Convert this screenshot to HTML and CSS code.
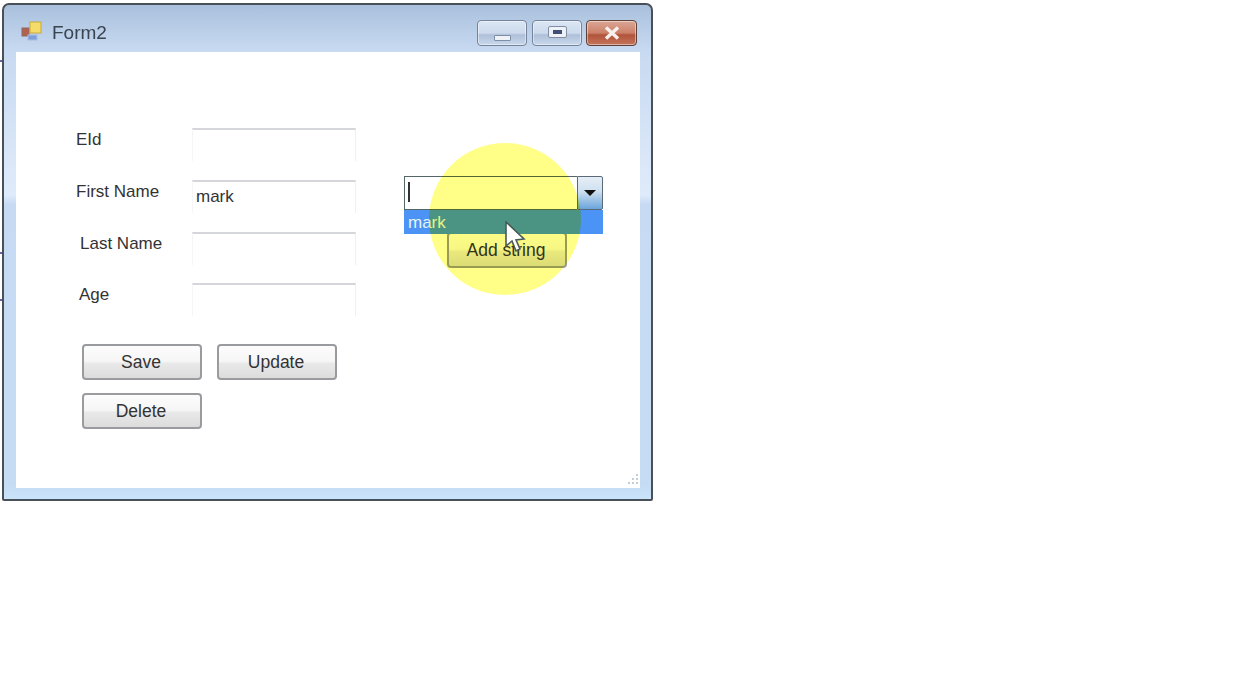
FILE: index.html
```html
<!DOCTYPE html>
<html lang="en">
<head>
    <meta charset="UTF-8">
    <meta name="viewport" content="width=device-width, initial-scale=1.0">
    <title>Form2</title>
    <link rel="stylesheet" href="styles.css">
</head>
<body>
    <span class="tick tick-1"></span>
    <span class="tick tick-2"></span>
    <span class="tick tick-3"></span>
    <div class="window">
        <div class="titlebar">
            <svg class="app-icon" width="22" height="22" viewBox="0 0 22 22">
                <rect x="1" y="8" width="7" height="8" fill="#b5604f" stroke="#8c6a66"/>
                <rect x="7" y="15" width="9" height="5" fill="#7d9fdc" stroke="#a9bce0"/>
                <rect x="9" y="2" width="11" height="11" fill="#f5dc6a" stroke="#c9a93f"/>
            </svg>
            <span class="title">Form2</span>
            <div class="caption-buttons">
                <div class="caption-btn">
                    <span class="min-glyph"></span>
                </div>
                <div class="caption-btn">
                    <span class="max-glyph"><span class="max-bar"></span></span>
                </div>
                <div class="caption-btn close">
                    <svg width="18" height="14" viewBox="0 0 18 14">
                        <path d="M3 1.5 L15 12.5 M15 1.5 L3 12.5" stroke="#f6f1ee" stroke-width="3.4" fill="none"/>
                    </svg>
                </div>
            </div>
        </div>

        <div class="form-body">
            <div class="left-col">
                <div class="field-row">
                    <span class="label">EId</span>
                    <div class="field"></div>
                </div>
                <div class="field-row">
                    <span class="label">First Name</span>
                    <div class="field">mark</div>
                </div>
                <div class="field-row third">
                    <span class="label indent-4">Last Name</span>
                    <div class="field"></div>
                </div>
                <div class="field-row last">
                    <span class="label indent-3">Age</span>
                    <div class="field"></div>
                </div>
                <div class="buttons">
                    <button class="btn">Save</button>
                    <button class="btn">Update</button>
                    <button class="btn">Delete</button>
                </div>
            </div>

            <div class="right-col">
                <div class="combo">
                    <div class="combo-input"><span class="caret"></span></div>
                    <div class="combo-arrow"><span class="arrow-down"></span></div>
                    <div class="combo-list">mark</div>
                </div>
                <button class="btn add-btn">Add string</button>
            </div>

            <svg class="grip" width="14" height="14" viewBox="0 0 14 14">
                <path d="M11 2h2v2h-2zM11 6h2v2h-2zM11 10h2v2h-2zM7 6h2v2H7zM7 10h2v2H7zM3 10h2v2H3z" fill="#c4ccd4"/>
            </svg>
            <div class="spotlight"></div>
            <svg class="cursor" width="24" height="34" viewBox="0 0 24 34">
                <path d="M2 1 L2 25 L8 20 L12 30 L16 28 L12 19 L20 18 Z" fill="#fff" stroke="#4a5a55" stroke-width="1.6"/>
            </svg>
        </div>
    </div>
</body>
</html>
```

FILE: styles.css
```css
body {
    margin: 0;
    background-color: #fff;
    font-family: "Liberation Sans", Arial, sans-serif;
    color: #333;
}

/* restos del escritorio a la izquierda */
.tick {
    position: absolute;
    left: 0;
    width: 2px;
    height: 2px;
    background-color: #6a62a8;
}
.tick-1 { top: 60px; }
.tick-2 { top: 252px; }
.tick-3 { top: 299px; }

/* ventana */
.window {
    width: 651px;
    height: 498px;
    margin: 3px 0 0 2px;
    box-sizing: border-box;
    border: 2px solid #4a5058;
    border-radius: 7px 7px 2px 2px;
    padding: 0 11px 11px 12px;
    display: flex;
    flex-direction: column;
    background: linear-gradient(to bottom, #a9c0dd 0, #c8daf1 46px, #dfebfb 190px, #c6daf3 200px, #c6dcf5 480px, #c9e4fb 100%);
    filter: blur(0.6px);
}
.titlebar {
    height: 47px;
    box-sizing: border-box;
    padding: 9px 0 0 5px;
    display: flex;
    align-items: center;
    flex-shrink: 0;
}
.app-icon {
    margin-right: 9px;
    margin-top: -4px;
}
.title {
    font-size: 19px;
    color: #3a4450;
}
.caption-buttons {
    margin-left: auto;
    margin-right: 3px;
    display: flex;
    gap: 5px;
}
.caption-btn {
    width: 50px;
    height: 26px;
    box-sizing: border-box;
    border: 1px solid #75849a;
    border-radius: 4px;
    display: flex;
    align-items: center;
    justify-content: center;
    background: linear-gradient(to bottom, #dbe6f4 0, #ccdaec 50%, #aebfd8 58%, #c9d8ec 100%);
    box-shadow: inset 0 0 0 1px rgba(255, 255, 255, 0.45);
}
.caption-btn.close {
    width: 51px;
    margin-left: -1px;
    background: linear-gradient(to bottom, #dba796 0, #cc8069 50%, #b0543a 58%, #c6745c 100%);
    border-color: #5d4038;
}
.min-glyph {
    width: 17px;
    height: 6px;
    margin-top: 9px;
    box-sizing: border-box;
    border: 1px solid #7f8ea5;
    border-radius: 1px;
    background-color: #eef2f7;
}
.max-glyph {
    width: 19px;
    height: 12px;
    margin-top: -3px;
    box-sizing: border-box;
    border: 1px solid #7f8ea5;
    border-radius: 2px;
    background-color: #eef2f7;
    display: flex;
    align-items: center;
    justify-content: center;
}
.max-bar {
    width: 9px;
    height: 4px;
    background-color: #3f4f78;
}

/* area del formulario */
.form-body {
    position: relative;
    flex: 1;
    display: flex;
    background-color: #fff;
}
.left-col {
    width: 388px;
    box-sizing: border-box;
    padding: 76px 0 0 60px;
}
.field-row {
    display: flex;
    height: 52px;
}
.field-row.third {
    height: 51px;
}
.field-row.last {
    height: 61px;
}
.label {
    width: 116px;
    font-size: 17px;
    line-height: 24px;
    flex-shrink: 0;
}
.indent-4 {
    padding-left: 4px;
    width: 112px;
}
.indent-3 {
    padding-left: 3px;
    width: 113px;
}
.field {
    width: 164px;
    height: 33px;
    box-sizing: border-box;
    border-top: 2px solid #d4d6da;
    border-left: 1px solid #f5f5f6;
    border-right: 1px solid #f0f0f2;
    padding: 4px 0 0 3px;
    font-size: 17px;
    line-height: 22px;
}
.buttons {
    display: grid;
    grid-template-columns: 120px 120px;
    gap: 13px 15px;
    margin-left: 6px;
}
.btn {
    height: 36px;
    width: 120px;
    padding: 0 2px 0 0;
    border: 2px solid #999b9e;
    border-radius: 4px;
    font-family: "Liberation Sans", Arial, sans-serif;
    font-size: 17.5px;
    color: #333;
    background: linear-gradient(to bottom, #fcfcfc 0, #f6f6f6 48%, #e9e9e9 54%, #dcdcdc 100%);
}

/* combo */
.right-col {
    padding-top: 124px;
}
.combo {
    position: relative;
    width: 199px;
    height: 34px;
    display: flex;
}
.combo-input {
    flex: 1;
    box-sizing: border-box;
    border: 1px solid #566;
    border-right: none;
    background-color: #fff;
    padding: 5px 0 0 3px;
}
.caret {
    display: block;
    width: 2px;
    height: 20px;
    background-color: #333;
}
.combo-arrow {
    width: 26px;
    box-sizing: border-box;
    border: 1px solid #5a6a78;
    border-radius: 0 2px 2px 0;
    background: linear-gradient(to bottom, #e6eef6 0, #cfe0f0 45%, #6aa5dc 100%);
    display: flex;
    align-items: center;
    justify-content: center;
}
.arrow-down {
    width: 0;
    height: 0;
    border-left: 6px solid transparent;
    border-right: 6px solid transparent;
    border-top: 6px solid #111;
}
.combo-list {
    position: absolute;
    left: 0;
    top: 34px;
    width: 199px;
    height: 24px;
    box-sizing: border-box;
    padding-left: 4px;
    background-color: #4b93f4;
    color: #e6f4f4;
    font-size: 17px;
    line-height: 26px;
    z-index: 2;
}
.add-btn {
    display: block;
    margin: 22px 0 0 43px;
}

/* resaltado del mouse */
.spotlight {
    position: absolute;
    left: 413px;
    top: 91px;
    width: 152px;
    height: 152px;
    border-radius: 50%;
    background-color: #ffff88;
    mix-blend-mode: multiply;
    z-index: 3;
}
.cursor {
    position: absolute;
    left: 488px;
    top: 169px;
    z-index: 4;
}
.grip {
    position: absolute;
    right: 1px;
    bottom: 2px;
}
```
